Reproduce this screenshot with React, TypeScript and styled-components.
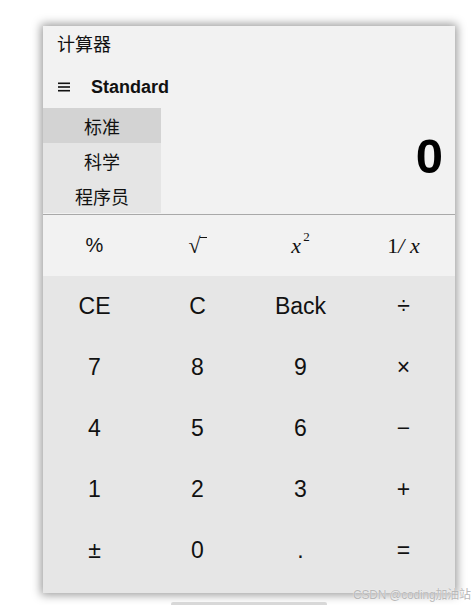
import React from "react";
import styled, { createGlobalStyle } from "styled-components";

const Global = createGlobalStyle`
  html, body { margin: 0; padding: 0; background: #ffffff; }
  body { font-family: "Liberation Sans", Arial, "Noto Sans CJK SC", sans-serif; color: #111; }
`;

const Page = styled.div`
  position: relative;
  width: 474px;
  height: 605px;
  overflow: hidden;
  padding: 26px 0 0 43px;
  box-sizing: border-box;
`;

const Window = styled.div`
  width: 412px;
  height: 567px;
  background: #f2f2f2;
  box-shadow: 0 0 9px 2px rgba(0, 0, 0, 0.4);
  display: flex;
  flex-direction: column;
`;

const TitleBar = styled.div`
  height: 36px;
  box-sizing: border-box;
  padding: 0 0 3px 14px;
  display: flex;
  align-items: center;
  font-family: "Noto Sans CJK SC", sans-serif;
  font-size: 18px;
  color: #111;
`;

const ModeBar = styled.div`
  height: 46px;
  box-sizing: border-box;
  padding: 4px 0 0 15px;
  display: flex;
  align-items: center;
  gap: 21px;
`;

const ModeTitle = styled.span`
  font-family: "Liberation Sans", Arial, sans-serif;
  font-weight: bold;
  font-size: 18px;
  color: #111;
`;

const Middle = styled.div`
  display: flex;
  height: 105px;
  border-bottom: 1px solid #a9a9a9;
  box-sizing: content-box;
  padding-bottom: 1px;
`;

const Nav = styled.ul`
  width: 118px;
  margin: 0;
  padding: 0;
  list-style: none;
  background: #e5e5e5;
`;

const NavItem = styled.li<{ $active?: boolean }>`
  height: 35px;
  display: flex;
  align-items: center;
  justify-content: center;
  background: ${(p) => (p.$active ? "#d3d3d3" : "transparent")};
  font-family: "Noto Sans CJK SC", sans-serif;
  font-size: 18px;
  color: #111;
`;

const Display = styled.div`
  flex: 1;
  display: flex;
  align-items: center;
  justify-content: flex-end;
  padding: 0 12px 9px 0;
  font-family: "Liberation Sans", Arial, sans-serif;
  font-weight: bold;
  font-size: 49px;
  color: #000;
`;

const FuncRow = styled.div`
  height: 61px;
  display: grid;
  grid-template-columns: repeat(4, 1fr);
  background: #f2f2f2;
`;

const FuncKey = styled.div<{ $serif?: boolean }>`
  display: flex;
  align-items: center;
  justify-content: center;
  font-family: ${(p) => (p.$serif ? `"Liberation Serif", "Times New Roman", serif` : `"Liberation Sans", Arial, sans-serif`)};
  font-size: ${(p) => (p.$serif ? "22px" : "20px")};
  color: #111;
`;

const Ital = styled.i`
  font-style: italic;
`;

const Sup = styled.span`
  position: relative;
  top: -9px;
  font-size: 13px;
  font-style: normal;
  margin-left: 2px;
`;

const RootBar = styled.span`
  display: inline-block;
  width: 7px;
  height: 0;
  border-top: 1px solid #111;
  margin-left: -1px;
  transform: translateY(-8px);
`;

const Keys = styled.div`
  flex: 1;
  background: #e6e6e6;
  display: grid;
  grid-template-columns: repeat(4, 1fr);
  grid-template-rows: repeat(5, 61px);
  align-content: start;
`;

const Key = styled.div`
  display: flex;
  align-items: center;
  justify-content: center;
  font-family: "Liberation Sans", Arial, sans-serif;
  font-size: 23px;
  color: #111;
`;

const BottomBar = styled.div`
  width: 156px;
  height: 4px;
  margin: 9px 0 0 128px;
  background: #d8d8d8;
  border-radius: 2px;
`;

const Watermark = styled.div`
  position: absolute;
  left: 353px;
  top: 585px;
  font-family: "Liberation Sans", "Noto Sans CJK SC", sans-serif;
  font-size: 12px;
  color: #b8b8b8;
  letter-spacing: -0.2px;
  text-shadow: 0 0 1px #fff;
`;

function Hamburger() {
  return (
    <svg width="12" height="10" viewBox="0 0 12 10">
      <rect x="0" y="0.5" width="12" height="1.6" fill="#111" />
      <rect x="0" y="4.2" width="12" height="1.6" fill="#111" />
      <rect x="0" y="7.9" width="12" height="1.6" fill="#111" />
    </svg>
  );
}

const keys = ["CE", "C", "Back", "÷", "7", "8", "9", "×", "4", "5", "6", "−", "1", "2", "3", "+", "±", "0", ".", "="];

export default function App() {
  return (
    <>
      <Global />
      <Page>
        <Window>
          <TitleBar>计算器</TitleBar>
          <ModeBar>
            <Hamburger />
            <ModeTitle>Standard</ModeTitle>
          </ModeBar>
          <Middle>
            <Nav>
              <NavItem $active>标准</NavItem>
              <NavItem>科学</NavItem>
              <NavItem>程序员</NavItem>
            </Nav>
            <Display>0</Display>
          </Middle>
          <FuncRow>
            <FuncKey>%</FuncKey>
            <FuncKey $serif>
              √<RootBar />
            </FuncKey>
            <FuncKey $serif>
              <Ital>x</Ital>
              <Sup>2</Sup>
            </FuncKey>
            <FuncKey $serif>
              1<Ital>/</Ital>&nbsp;<Ital>x</Ital>
            </FuncKey>
          </FuncRow>
          <Keys>
            {keys.map((k) => (
              <Key key={k}>{k}</Key>
            ))}
          </Keys>
        </Window>
        <BottomBar />
        <Watermark>CSDN @coding加油站</Watermark>
      </Page>
    </>
  );
}
